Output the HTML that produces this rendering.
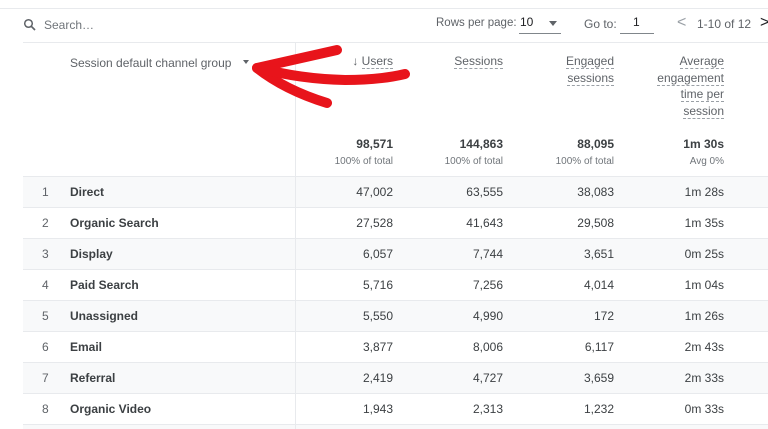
<!DOCTYPE html><html><head><style>
html,body{margin:0;width:768px;height:429px;overflow:hidden}
body{background:#fff;font-family:"Liberation Sans",Arial,sans-serif;position:relative;color:#202124}
.a{position:absolute}
.t{font-size:12px}
.h{color:#5f6368;font-size:12px;text-align:right;line-height:16.5px}
.h span{border-bottom:1px dashed #9aa0a6}
.row{position:absolute;left:23px;width:745px;height:30px;border-bottom:1px solid #e8eaed;font-size:12px;color:#3c4043}
.row div{position:absolute;top:8px}
.row div:first-child{color:#5f6368}
.row div:nth-child(2){font-weight:bold;color:#3c4043}
.g{background:#f8f9fa}
</style></head><body>
<div class="a" style="left:0;top:8px;width:768px;border-top:1px solid #e8eaed"></div>
<div class="a" style="left:23px;top:42px;width:745px;border-top:1px solid #e8eaed"></div>
<svg class="a" style="left:23px;top:18px" width="14" height="14" viewBox="0 0 14 14"><circle cx="5.5" cy="5.5" r="3.8" fill="none" stroke="#5f6368" stroke-width="1.5"/><path d="M8.3 8.3L12 12" stroke="#5f6368" stroke-width="1.7"/></svg>
<div class="a t" style="left:44px;top:18px;color:#70757a">Search…</div>
<div class="a" style="left:436px;top:17px;color:#5f6368;font-size:11.5px">Rows per page:</div>
<div class="a t" style="left:520px;top:15px">10</div>
<div class="a" style="left:519px;top:33px;width:42px;border-top:1px solid #80868b"></div>
<div class="a" style="left:549px;top:21px;border:4px solid transparent;border-top:5px solid #5f6368"></div>
<div class="a t" style="left:584px;top:17px;color:#5f6368">Go to:</div>
<div class="a t" style="left:633px;top:15px">1</div>
<div class="a" style="left:620px;top:33px;width:34px;border-top:1px solid #80868b"></div>
<div class="a" style="left:677px;top:14px;font-size:16px;color:#9aa0a6">&lt;</div>
<div class="a t" style="left:697px;top:17px;color:#5f6368">1-10 of 12</div>
<div class="a" style="left:760px;top:14px;font-size:16px;color:#202124">&gt;</div>
<div class="a" style="left:295px;top:43px;height:386px;border-left:1px solid #e8eaed"></div>
<div class="a t" style="left:70px;top:56px;color:#5f6368">Session default channel group</div>
<div class="a" style="left:243px;top:60px;border:3px solid transparent;border-top:4px solid #5f6368"></div>
<div class="a h" style="left:333px;top:53px;width:60px">↓ <span>Users</span></div>
<div class="a h" style="left:433px;top:53px;width:70px"><span>Sessions</span></div>
<div class="a h" style="left:534px;top:53px;width:80px"><span>Engaged</span><br><span>sessions</span></div>
<div class="a h" style="left:624px;top:53px;width:100px"><span>Average</span><br><span>engagement</span><br><span>time per</span><br><span>session</span></div>
<div class="a t" style="left:293px;top:137px;width:100px;text-align:right;font-weight:bold;color:#3c4043">98,571</div>
<div class="a t" style="left:403px;top:137px;width:100px;text-align:right;font-weight:bold;color:#3c4043">144,863</div>
<div class="a t" style="left:514px;top:137px;width:100px;text-align:right;font-weight:bold;color:#3c4043">88,095</div>
<div class="a t" style="left:624px;top:137px;width:100px;text-align:right;font-weight:bold;color:#3c4043">1m 30s</div>
<div class="a" style="left:293px;top:156px;width:100px;text-align:right;font-size:10px;color:#70757a">100% of total</div>
<div class="a" style="left:403px;top:156px;width:100px;text-align:right;font-size:10px;color:#70757a">100% of total</div>
<div class="a" style="left:514px;top:156px;width:100px;text-align:right;font-size:10px;color:#70757a">100% of total</div>
<div class="a" style="left:624px;top:156px;width:100px;text-align:right;font-size:10px;color:#70757a">Avg 0%</div>
<div class="a" style="left:23px;top:176px;width:745px;border-top:1px solid #e8eaed"></div>

<div class="row g" style="top:177px"><div style="left:19px">1</div><div style="left:47px">Direct</div><div style="left:270px;width:100px;text-align:right">47,002</div><div style="left:380px;width:100px;text-align:right">63,555</div><div style="left:491px;width:100px;text-align:right">38,083</div><div style="left:601px;width:100px;text-align:right">1m 28s</div></div>
<div class="row" style="top:208px"><div style="left:19px">2</div><div style="left:47px">Organic Search</div><div style="left:270px;width:100px;text-align:right">27,528</div><div style="left:380px;width:100px;text-align:right">41,643</div><div style="left:491px;width:100px;text-align:right">29,508</div><div style="left:601px;width:100px;text-align:right">1m 35s</div></div>
<div class="row g" style="top:239px"><div style="left:19px">3</div><div style="left:47px">Display</div><div style="left:270px;width:100px;text-align:right">6,057</div><div style="left:380px;width:100px;text-align:right">7,744</div><div style="left:491px;width:100px;text-align:right">3,651</div><div style="left:601px;width:100px;text-align:right">0m 25s</div></div>
<div class="row" style="top:270px"><div style="left:19px">4</div><div style="left:47px">Paid Search</div><div style="left:270px;width:100px;text-align:right">5,716</div><div style="left:380px;width:100px;text-align:right">7,256</div><div style="left:491px;width:100px;text-align:right">4,014</div><div style="left:601px;width:100px;text-align:right">1m 04s</div></div>
<div class="row g" style="top:301px"><div style="left:19px">5</div><div style="left:47px">Unassigned</div><div style="left:270px;width:100px;text-align:right">5,550</div><div style="left:380px;width:100px;text-align:right">4,990</div><div style="left:491px;width:100px;text-align:right">172</div><div style="left:601px;width:100px;text-align:right">1m 26s</div></div>
<div class="row" style="top:332px"><div style="left:19px">6</div><div style="left:47px">Email</div><div style="left:270px;width:100px;text-align:right">3,877</div><div style="left:380px;width:100px;text-align:right">8,006</div><div style="left:491px;width:100px;text-align:right">6,117</div><div style="left:601px;width:100px;text-align:right">2m 43s</div></div>
<div class="row g" style="top:363px"><div style="left:19px">7</div><div style="left:47px">Referral</div><div style="left:270px;width:100px;text-align:right">2,419</div><div style="left:380px;width:100px;text-align:right">4,727</div><div style="left:491px;width:100px;text-align:right">3,659</div><div style="left:601px;width:100px;text-align:right">2m 33s</div></div>
<div class="row" style="top:394px"><div style="left:19px">8</div><div style="left:47px">Organic Video</div><div style="left:270px;width:100px;text-align:right">1,943</div><div style="left:380px;width:100px;text-align:right">2,313</div><div style="left:491px;width:100px;text-align:right">1,232</div><div style="left:601px;width:100px;text-align:right">0m 33s</div></div>
<div class="a g" style="left:23px;top:425px;width:745px;height:4px"></div>
<div class="a" style="left:295px;top:177px;height:252px;border-left:1px solid #e8eaed"></div>

<svg class="a" style="left:0;top:0" width="768" height="429"><g fill="none" stroke="#e8141b" stroke-width="10" stroke-linecap="round" stroke-linejoin="round"><path d="M257 68L337 50"/><path d="M257 68Q285 90 327 103"/><path d="M259 68Q300 79 345 80Q380 80 405 74"/></g></svg>
</body></html>
